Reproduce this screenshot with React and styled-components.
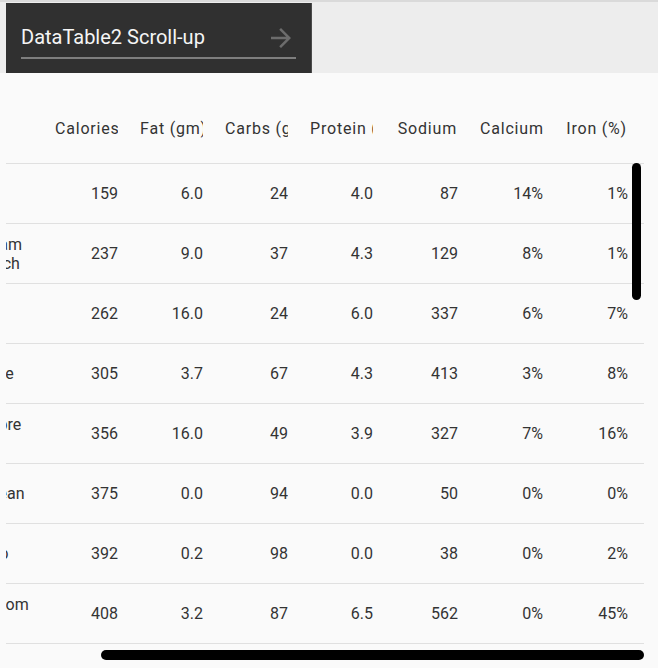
import React from "react";
import styled, { createGlobalStyle } from "styled-components";

const GlobalStyle = createGlobalStyle`
  html, body {
    margin: 0;
    padding: 0;
    background: #fafafa;
    font-family: Roboto, "Noto Sans", "Liberation Sans", sans-serif;
  }
`;

const columns = ["Calories", "Fat (gm)", "Carbs (gm)", "Protein (gm)", "Sodium", "Calcium", "Iron (%)"];

const desserts = [
  { name: "Frozen Yogurt", values: ["159", "6.0", "24", "4.0", "87", "14%", "1%"] },
  { name: "Ice cream sandwich", values: ["237", "9.0", "37", "4.3", "129", "8%", "1%"] },
  { name: "Eclair", values: ["262", "16.0", "24", "6.0", "337", "6%", "7%"] },
  { name: "Cupcake", values: ["305", "3.7", "67", "4.3", "413", "3%", "8%"] },
  { name: "Gingerbread", values: ["356", "16.0", "49", "3.9", "327", "7%", "16%"] },
  { name: "Jelly Bean", values: ["375", "0.0", "94", "0.0", "50", "0%", "0%"] },
  { name: "Lollipop", values: ["392", "0.2", "98", "0.0", "38", "0%", "2%"] },
  { name: "Honeycomb", values: ["408", "3.2", "87", "6.5", "562", "0%", "45%"] },
];

const App = () => {
  return (
    <Page>
      <GlobalStyle />
      <TopBar>
        <Tab>
          <Field>
            <FieldText>DataTable2 Scroll-up</FieldText>
            <ArrowIcon viewBox="0 0 24 24">
              <path d="M12 4l-1.41 1.41L16.17 11H4v2h12.17l-5.58 5.59L12 20l8-8z" />
            </ArrowIcon>
          </Field>
        </Tab>
      </TopBar>
      <TableArea>
        <Viewport>
          <ScrollContent>
            <HeaderRow>
              <NameCell>Name</NameCell>
              {columns.map(c => (
                <NumCell key={c} $header>
                  {c}
                </NumCell>
              ))}
            </HeaderRow>
            <Body>
              {desserts.map(d => (
                <Row key={d.name}>
                  <NameCell>{d.name}</NameCell>
                  {d.values.map((v, i) => (
                    <NumCell key={i}>{v}</NumCell>
                  ))}
                </Row>
              ))}
            </Body>
          </ScrollContent>
        </Viewport>
        <VThumb />
        <HThumb />
      </TableArea>
    </Page>
  );
};

const Page = styled.div`
  width: 658px;
  height: 668px;
  overflow: hidden;
  background: #fafafa;
`;

const TopBar = styled.div`
  border-top: 2px solid #dadada;
  padding: 1px 0 0 6px;
  background: #ededed;
  display: flex;
`;

const Tab = styled.div`
  box-sizing: border-box;
  width: 306px;
  height: 70px;
  background: #303030;
  border-right: 1px solid #4b4b4b;
  padding: 16px 15px 0 15px;
`;

const Field = styled.div`
  display: flex;
  align-items: flex-start;
  justify-content: space-between;
  height: 38px;
  border-bottom: 2px solid #7e7e7e;
`;

const FieldText = styled.span`
  color: #f5f5f5;
  font-size: 20px;
  line-height: 24px;
  margin-top: 6px;
`;

const ArrowIcon = styled.svg`
  width: 30px;
  height: 30px;
  margin-top: 4px;
  fill: #6c6c6c;
`;

const TableArea = styled.div`
  position: relative;
  padding: 20px 14px 0 6px;
  height: 575px;
`;

const Viewport = styled.div`
  width: 638px;
  height: 100%;
  overflow: hidden;
`;

const ScrollContent = styled.div`
  width: 692px;
  margin-left: -54px;
  height: 100%;
  display: flex;
  flex-direction: column;
  color: #333;
  font-size: 16px;
`;

const HeaderRow = styled.div`
  display: flex;
  align-items: center;
  height: 70px;
  padding-right: 16px;
  border-bottom: 1px solid #e0e0e0;
`;

const Body = styled.div`
  flex: 1;
  overflow: hidden;
`;

const Row = styled.div`
  display: flex;
  align-items: center;
  height: 59px;
  padding-right: 16px;
  border-bottom: 1px solid #e0e0e0;
`;

const NameCell = styled.div`
  box-sizing: border-box;
  flex: 0 0 81px;
  padding-right: 3.5px;
  line-height: 19px;
  overflow-wrap: anywhere;
`;

const NumCell = styled.div`
  box-sizing: border-box;
  flex: 0 0 85px;
  padding-left: ${p => (p.$header ? "22px" : "21px")};
  padding-right: ${p => (p.$header ? "1px" : "0")};
  text-align: right;
  white-space: nowrap;
  overflow: hidden;
  line-height: 19px;
  letter-spacing: ${p => (p.$header ? "0.8px" : "0")};
`;

const VThumb = styled.div`
  position: absolute;
  left: 632px;
  top: 90px;
  width: 9px;
  height: 137px;
  border-radius: 5px;
  background: #000;
`;

const HThumb = styled.div`
  position: absolute;
  left: 101px;
  top: 577px;
  width: 543px;
  height: 10px;
  border-radius: 5px;
  background: #000;
`;

export default App;
